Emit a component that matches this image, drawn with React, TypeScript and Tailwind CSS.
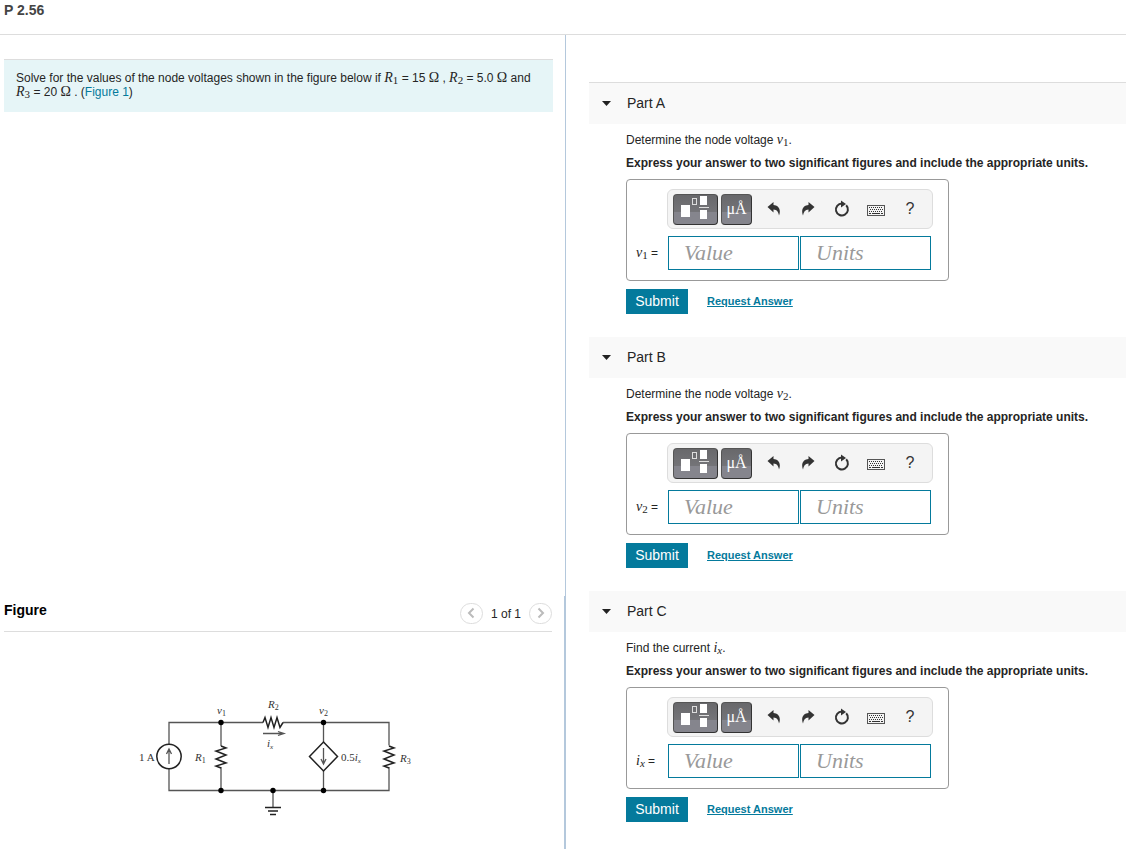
import { ReactNode } from "react"

type PartProps = {
  id: string
  title: string
  prompt: string
  symbol: string
  sub: string
  italicSub?: boolean
}

const parts: PartProps[] = [
  { id: "a", title: "Part A", prompt: "Determine the node voltage", symbol: "v", sub: "1" },
  { id: "b", title: "Part B", prompt: "Determine the node voltage", symbol: "v", sub: "2" },
  { id: "c", title: "Part C", prompt: "Find the current", symbol: "i", sub: "x", italicSub: true },
]

const MathVar = ({ symbol, sub, italicSub }: { symbol: string; sub: string; italicSub?: boolean }) => (
  <span className="font-['Liberation_Serif',serif] text-[14px] leading-none">
    <i>{symbol}</i>
    <sub className={`bottom-[-2px] text-[11px] ${italicSub ? "italic" : ""}`}>{sub}</sub>
  </span>
)

const Omega = () => <span className="font-['Liberation_Serif',serif] text-[14px] leading-none">Ω</span>

const ToolButton = ({ label, children }: { label: string; children: ReactNode }) => (
  <button type="button" aria-label={label} className="flex h-6 w-6 items-center justify-center text-[#333]">
    {children}
  </button>
)

const darkButton =
  "h-[31px] rounded-[4px] border border-[#555] border-r-[#333] border-b-[#333] bg-linear-to-b from-[#68686b] from-0% via-[#747478] via-58% to-[#85858d] to-60% text-white flex items-center justify-center"

const Toolbar = () => (
  <div className="flex h-10 w-[266px] items-center rounded-md border border-[#ddd] bg-[#f4f4f4] pl-[5px]">
    <button type="button" aria-label="Templates" className={`${darkButton} w-[45px]`}>
      <svg width="29" height="27" viewBox="0 0 29 27" aria-hidden="true">
        <rect x="0" y="9" width="9" height="12" fill="#fff" />
        <rect x="11.5" y="2.5" width="4" height="6" fill="none" stroke="#ddd" />
        <rect x="19" y="0" width="7" height="9" fill="#fff" />
        <rect x="18" y="11" width="10" height="1" fill="#ddd" />
        <rect x="19" y="14" width="7" height="9" fill="#fff" />
      </svg>
    </button>
    <button type="button" aria-label="Units" className={`${darkButton} ml-[3px] w-[31px] font-['Liberation_Serif',serif] text-[16px] leading-none`}>
      μÅ
    </button>
    <div className="ml-[10px] flex gap-[10px]">
      <ToolButton label="Undo">
        <svg width="14" height="14" viewBox="0 0 14 14" aria-hidden="true">
          <path d="M.5 5 6.500 0v3c4.500.2 8 4 5.500 10.500C11.500 10 10 7.800 6.500 7.500v3z" fill="currentColor" />
        </svg>
      </ToolButton>
      <ToolButton label="Redo">
        <svg width="14" height="14" viewBox="0 0 14 14" aria-hidden="true">
          <path d="M13.500 5 7.500 0v3C3 3.200-.5 7 2 13.500 2.500 10 4 7.800 7.500 7.500v3z" fill="currentColor" />
        </svg>
      </ToolButton>
      <ToolButton label="Reset">
        <svg width="16" height="18" viewBox="0 0 16 18" fill="none" stroke="currentColor" aria-hidden="true">
          <path d="M12.200 5.300A6 6 0 1 1 8 3.500" strokeWidth="2" />
          <path d="M7 .5l5 3.500-5 3.500z" fill="currentColor" stroke="none" />
        </svg>
      </ToolButton>
      <ToolButton label="Keyboard">
        <svg className="mt-[3px]" width="18" height="11" viewBox="0 0 18 11" fill="none" stroke="currentColor" aria-hidden="true">
          <rect x=".5" y=".5" width="17" height="10" stroke="#555" />
          <path d="M2 2.500h14M3 4.500h13M2 6.500h14" strokeDasharray="1 1" />
          <path d="M2 8.500h2M5 8.500h8M14 8.500h2" />
        </svg>
      </ToolButton>
      <ToolButton label="Help">
        <span className="text-[16px]">?</span>
      </ToolButton>
    </div>
  </div>
)

const Part = ({ id, title, prompt, symbol, sub, italicSub }: PartProps) => {
  const variable = <MathVar symbol={symbol} sub={sub} italicSub={italicSub} />
  const field =
    "h-[34px] w-[131px] border border-[#047a9c] bg-white px-[15px] font-['Liberation_Serif',serif] text-[22px] italic outline-none placeholder:text-[#999]"

  return (
    <section className="group mb-[23px]">
      <h2 className="border-[#ddd] group-first:border-t">
        <button
          type="button"
          aria-expanded="true"
          className="flex h-[41px] w-full items-center bg-[#f9f9f9] pb-px pl-[13px] text-[14px]"
        >
          <svg width="9" height="5" viewBox="0 0 9 5" aria-hidden="true">
            <path d="M0 0h9L4.500 5z" fill="#222" />
          </svg>
          <span className="ml-4">{title}</span>
        </button>
      </h2>
      <form className="pl-[37px]" onSubmit={(e) => e.preventDefault()}>
        <p className="mt-2 h-4 leading-4">
          {prompt} {variable}.
        </p>
        <p className="mt-[7px] h-4 whitespace-nowrap font-bold leading-4">
          Express your answer to two significant figures and include the appropriate units.
        </p>
        <div className="mt-2 h-[102px] w-[323px] rounded-[4px] border border-[#999] pt-[9px] pl-[9px]">
          <div className="pl-[31px]">
            <Toolbar />
          </div>
          <div className="mt-[7px] flex items-center">
            <label htmlFor={`value-${id}`} className="w-8 shrink-0 whitespace-nowrap">
              {variable} =
            </label>
            <input id={`value-${id}`} placeholder="Value" className={field} />
            <input id={`units-${id}`} aria-label="Units" placeholder="Units" className={`${field} ml-px`} />
          </div>
        </div>
        <div className="mt-2 flex items-center">
          <button type="submit" className="h-[25px] w-[62px] bg-[#047a9c] pb-px text-[14px] text-white">
            Submit
          </button>
          <a href="#request" className="ml-[19px] text-[11px] font-bold text-[#047a9c] underline">
            Request Answer
          </a>
        </div>
      </form>
    </section>
  )
}

const Circuit = () => (
  <svg
    width="290"
    height="130"
    viewBox="130 695 290 130"
    fill="none"
    stroke="#555"
    strokeWidth="1.3"
    role="img"
    aria-label="Circuit with nodes v1 and v2"
  >
    <path d="M169 744v-21.500h94M283 722.500h106v23M389 767v23.500H169v-22M221 722v24M221 767v24M323.500 722v20M323.500 770v21M273 791v16" />
    <g stroke="#222" strokeWidth="1.500">
      <path d="M221 746l5 2-10 3 10 4-10 4 10 4-10 3 5 2" />
      <path d="M389 746l5 2-10 3 10 4-10 4 10 4-10 3 5 2" />
      <path d="M263 722.500l2-5 3 10 3-10 3 10 3-10 3 10 3-5" />
      <circle cx="169" cy="756.500" r="12.200" />
      <path d="M323.500 742l14 14.500-14 14.500-14-14.500z" />
      <path d="M265 807.500h16M268 811h10M270 814.500h6" />
    </g>
    <path d="M169 764v-15M166.500 754l2.500-5 2.500 5M323.500 748v16M321 759l2.500 5 2.500-5M263 733.500h20M278 731.500l6 2-6 2" />
    <g fill="#000" stroke="none">
      <circle cx="221" cy="722.500" r="2.700" />
      <circle cx="323.500" cy="722.500" r="2.700" />
      <circle cx="221" cy="790.500" r="2.700" />
      <circle cx="273" cy="790.500" r="2.700" />
      <circle cx="323.500" cy="790.500" r="2.700" />
    </g>
    <g fill="#333" stroke="none" className="font-['Liberation_Serif',serif] text-[11px]">
      <text x="139" y="761">1 A</text>
      <text x="195" y="761" fontStyle="italic">R<tspan dy="2" fontSize="8" fontStyle="normal">1</tspan></text>
      <text x="268" y="708" fontStyle="italic">R<tspan dy="2" fontSize="8" fontStyle="normal">2</tspan></text>
      <text x="400" y="762" fontStyle="italic">R<tspan dy="2" fontSize="8" fontStyle="normal">3</tspan></text>
      <text x="217" y="714" fontStyle="italic">v<tspan dy="2" fontSize="8" fontStyle="normal">1</tspan></text>
      <text x="319" y="714" fontStyle="italic">v<tspan dy="2" fontSize="8" fontStyle="normal">2</tspan></text>
      <text x="267" y="747" fontStyle="italic">i<tspan dy="2" fontSize="7">x</tspan></text>
      <text x="341" y="761">0.5<tspan fontStyle="italic">i</tspan><tspan dy="2" fontSize="7" fontStyle="italic">x</tspan></text>
    </g>
  </svg>
)

const PagerButton = ({ label, d }: { label: string; d: string }) => (
  <button type="button" aria-label={label} className="flex h-[21px] w-[23px] items-center justify-center rounded-full border border-[#ddd]">
    <svg width="8" height="12" viewBox="0 0 8 12" fill="none" stroke="#bbb" strokeWidth="2" aria-hidden="true">
      <path d={d} />
    </svg>
  </button>
)

export default function App() {
  return (
    <div className="flex min-h-screen flex-col bg-white font-['Liberation_Sans',Arial,sans-serif] text-[12px] text-[#252525]">
      <header className="h-[35px] border-b border-[#ddd] pl-1">
        <h1 className="pt-[2px] text-[14px] font-bold leading-4 text-[#444]">P 2.56</h1>
      </header>
      <main className="flex grow">
        <div className="flex w-[566px] shrink-0 flex-col">
          <div className="grow border-r border-[#b4c8dc] pt-6 pr-3 pl-1">
            <div className="h-[53px] border-t border-[#ddd] bg-[#e6f5f7] pt-[11px] pl-3 leading-[14px]">
              <p>
                Solve for the values of the node voltages shown in the figure below if{" "}
                <MathVar symbol="R" sub="1" /> = 15 <Omega /> , <MathVar symbol="R" sub="2" /> = 5.0 <Omega /> and
                <br />
                <MathVar symbol="R" sub="3" /> = 20 <Omega /> . (<a href="#figure" className="text-[#047a9c]">Figure 1</a>)
              </p>
            </div>
          </div>
          <section id="figure" className="h-[253px] border-r-2 border-[#b4c8dc] pr-3 pl-1">
            <div className="flex h-9 items-center justify-between border-b border-[#ddd]">
              <h2 className="pb-[6px] text-[14px] font-bold text-black">Figure</h2>
              <div className="flex items-center gap-2 pb-px">
                <PagerButton label="Previous figure" d="M6.500 1.500 2 6l4.500 4.500" />
                <span className="pt-px">1 of 1</span>
                <PagerButton label="Next figure" d="M1.500 1.500 6 6l-4.500 4.500" />
              </div>
            </div>
            <div className="pt-[63px] pl-[126px]">
              <Circuit />
            </div>
          </section>
        </div>
        <div className="grow pt-[47px] pl-[23px]">
          {parts.map((part) => (
            <Part key={part.id} {...part} />
          ))}
        </div>
      </main>
    </div>
  )
}
